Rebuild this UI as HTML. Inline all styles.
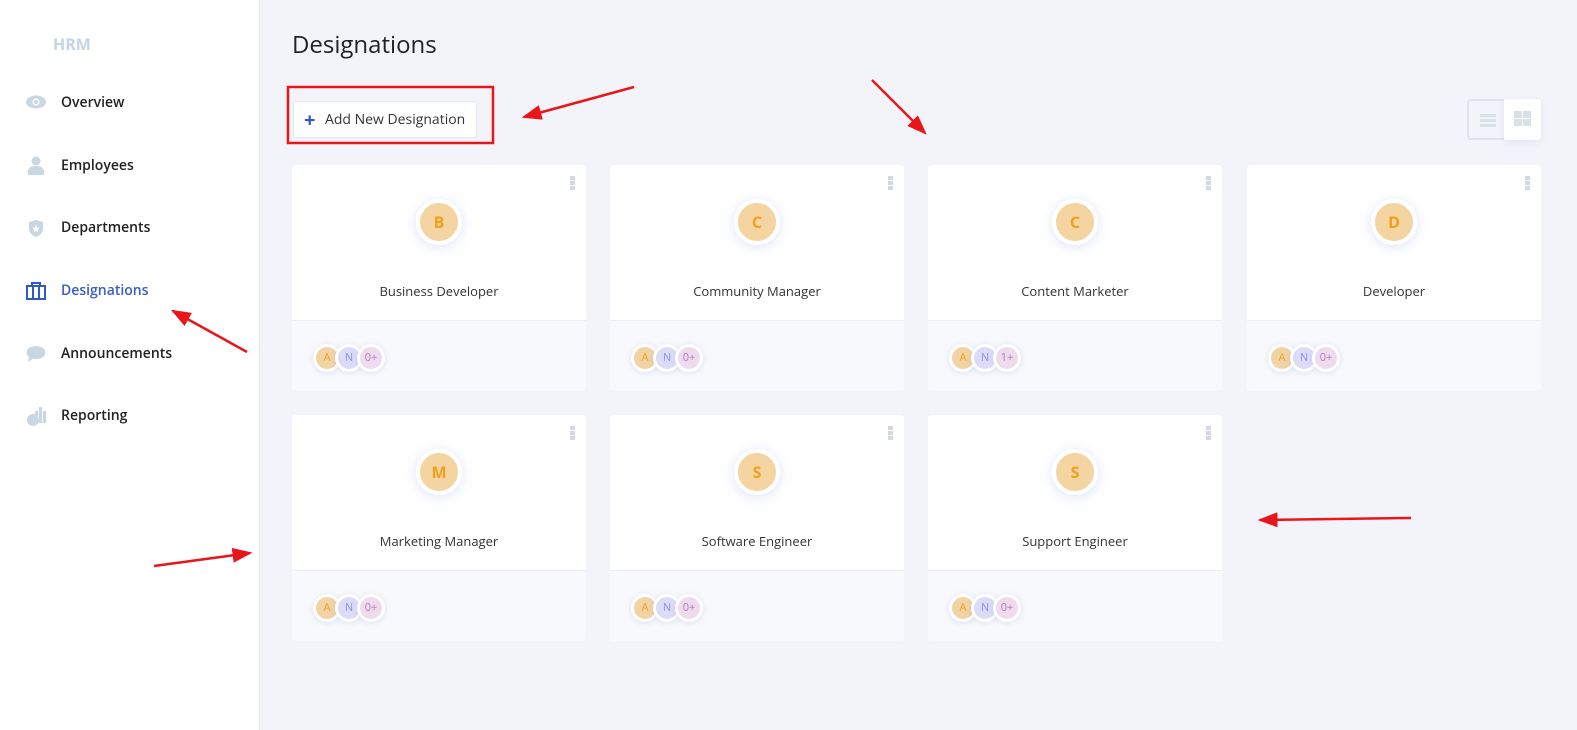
<!DOCTYPE html>
<html><head><meta charset="utf-8"><style>
*{box-sizing:border-box;margin:0;padding:0}
body{width:1577px;height:730px;overflow:hidden;background:#f3f4f9;font-family:"Open Sans","Liberation Sans",sans-serif;position:relative;color:#2a2f3a}
.side{position:absolute;left:0;top:0;width:260px;height:730px;background:#fff;border-right:1px solid #e6e9ef}
.logo{position:absolute;left:53px;top:33px;font-weight:bold;font-size:16px;color:#c3d4e2}
.nav{position:absolute;left:61px;font-size:14px;font-weight:600;color:#222}
.ic{position:absolute;left:26px}
h1{position:absolute;left:292px;top:28px;font-size:24px;font-weight:400;color:#222}
.btn{position:absolute;left:293px;top:101px;width:184px;height:37px;background:#fff;border:1px solid #e6e9ef;border-radius:3px;font-size:14px;color:#333;line-height:36px;padding-left:31px}
.btn b{position:absolute;left:10px;top:0;color:#2f59c5;font-size:20px}
.card{position:absolute;width:294px;height:226px;background:#fff;border-radius:4px;overflow:hidden}
.card .ft{position:absolute;left:0;top:155px;width:100%;height:71px;background:#f8f9fc;border-top:1px solid #eceef3}
.big{position:absolute;left:124px;top:34px;width:46px;height:46px;border-radius:50%;background:#f4d4a0;border:4px solid #fff;box-shadow:0 2px 12px rgba(150,170,220,.3);color:#f0a01c;font-weight:bold;font-size:16px;text-align:center;line-height:38px}
.nm{position:absolute;left:0;width:100%;top:117px;text-align:center;font-size:13px;color:#333}
.dots{position:absolute;left:278px;top:11px;width:5px}
.dots i{display:block;width:5px;height:4px;background:#d4d8e2;margin-bottom:1px}
.s{position:absolute;top:23px;width:28px;height:28px;border-radius:50%;border:3px solid #fff;font-size:11px;text-align:center;line-height:22px;box-shadow:0 1px 6px rgba(150,170,220,.3)}
</style></head><body>
<div class="side">
<div class="logo">HRM</div>
<svg class="ic" style="top:95px" width="20" height="14" viewBox="0 0 20 14"><ellipse cx="10" cy="7" rx="10" ry="6.5" fill="#c9d7e2"/><circle cx="10" cy="7" r="3.5" fill="#fff"/><circle cx="10" cy="7" r="2" fill="#c9d7e2"/></svg>
<div class="nav" style="top:93px">Overview</div>
<svg class="ic" style="top:156px" width="20" height="20" viewBox="0 0 20 20"><circle cx="10" cy="5" r="4.5" fill="#c9d7e2"/><path d="M2 19v-4c0-3 3-5 8-5s8 2 8 5v4z" fill="#c9d7e2"/></svg>
<div class="nav" style="top:156px">Employees</div>
<svg class="ic" style="top:219px" width="20" height="20" viewBox="0 0 20 20"><path d="M3 3l7-2 7 2v7c0 4-4 7-7 8-3-1-7-4-7-8z" fill="#c9d7e2"/><path d="M10 6l1.2 2.5 2.6.3-2 1.8.6 2.6L10 12l-2.4 1.2.6-2.6-2-1.8 2.6-.3z" fill="#fff"/></svg>
<div class="nav" style="top:218px">Departments</div>
<svg class="ic" style="top:281px" width="20" height="19" viewBox="0 0 20 19"><path d="M6 5V2h8v3" fill="none" stroke="#2f59c5" stroke-width="2"/><rect x="1" y="5" width="18" height="13" fill="none" stroke="#2f59c5" stroke-width="2"/><path d="M7 5v13M13 5v13" stroke="#2f59c5" stroke-width="2"/></svg>
<div class="nav" style="top:281px;color:#3a5cc7">Designations</div>
<svg class="ic" style="top:345px" width="20" height="18" viewBox="0 0 20 18"><ellipse cx="10" cy="7.5" rx="9.5" ry="6.5" fill="#c9d7e2"/><path d="M3 11l-1 6 6-4z" fill="#c9d7e2"/></svg>
<div class="nav" style="top:344px">Announcements</div>
<svg class="ic" style="top:405px" width="22" height="22" viewBox="0 0 22 22"><circle cx="7" cy="15" r="6" fill="#c9d7e2"/><rect x="9" y="6" width="3" height="12" fill="#c9d7e2"/><rect x="13" y="2" width="3" height="16" fill="#c9d7e2"/><rect x="17" y="6" width="3" height="12" fill="#c9d7e2"/></svg>
<div class="nav" style="top:406px">Reporting</div>
</div>
<h1>Designations</h1>
<div class="btn"><b>+</b>Add New Designation</div>
<div style="position:absolute;left:1467px;top:99px;width:38px;height:41px;border:2px solid #dfe4ec;border-right:none;border-radius:4px 0 0 4px;background:#f3f4f9"><div style="position:absolute;left:11px;top:13px;width:16px;height:3px;background:#d6e2e8;box-shadow:0 5px 0 #d6e2e8,0 10px 0 #d6e2e8"></div></div>
<div style="position:absolute;left:1504px;top:99px;width:37px;height:41px;background:#fff;border-radius:0 4px 4px 0;box-shadow:0 2px 8px rgba(150,170,220,.2)"><div style="position:absolute;left:10px;top:12px;width:8px;height:7px;background:#d6e2e8;box-shadow:9px 0 0 #d6e2e8,0 8px 0 #d6e2e8,9px 8px 0 #d6e2e8"></div></div>

<div class="card" style="left:292px;top:165px"><div class="dots"><i></i><i></i><i></i></div><div class="big">B</div><div class="nm">Business Developer</div><div class="ft"><div class="s" style="left:21px;background:#f2d3a3;color:#f0a01c">A</div><div class="s" style="left:43px;background:#dcdcf9;color:#8b8ff0">N</div><div class="s" style="left:65px;background:#eedcee;color:#b07ac0">0+</div></div></div>
<div class="card" style="left:610px;top:165px"><div class="dots"><i></i><i></i><i></i></div><div class="big">C</div><div class="nm">Community Manager</div><div class="ft"><div class="s" style="left:21px;background:#f2d3a3;color:#f0a01c">A</div><div class="s" style="left:43px;background:#dcdcf9;color:#8b8ff0">N</div><div class="s" style="left:65px;background:#eedcee;color:#b07ac0">0+</div></div></div>
<div class="card" style="left:928px;top:165px"><div class="dots"><i></i><i></i><i></i></div><div class="big">C</div><div class="nm">Content Marketer</div><div class="ft"><div class="s" style="left:21px;background:#f2d3a3;color:#f0a01c">A</div><div class="s" style="left:43px;background:#dcdcf9;color:#8b8ff0">N</div><div class="s" style="left:65px;background:#eedcee;color:#b07ac0">1+</div></div></div>
<div class="card" style="left:1247px;top:165px"><div class="dots"><i></i><i></i><i></i></div><div class="big">D</div><div class="nm">Developer</div><div class="ft"><div class="s" style="left:21px;background:#f2d3a3;color:#f0a01c">A</div><div class="s" style="left:43px;background:#dcdcf9;color:#8b8ff0">N</div><div class="s" style="left:65px;background:#eedcee;color:#b07ac0">0+</div></div></div>
<div class="card" style="left:292px;top:415px"><div class="dots"><i></i><i></i><i></i></div><div class="big">M</div><div class="nm">Marketing Manager</div><div class="ft"><div class="s" style="left:21px;background:#f2d3a3;color:#f0a01c">A</div><div class="s" style="left:43px;background:#dcdcf9;color:#8b8ff0">N</div><div class="s" style="left:65px;background:#eedcee;color:#b07ac0">0+</div></div></div>
<div class="card" style="left:610px;top:415px"><div class="dots"><i></i><i></i><i></i></div><div class="big">S</div><div class="nm">Software Engineer</div><div class="ft"><div class="s" style="left:21px;background:#f2d3a3;color:#f0a01c">A</div><div class="s" style="left:43px;background:#dcdcf9;color:#8b8ff0">N</div><div class="s" style="left:65px;background:#eedcee;color:#b07ac0">0+</div></div></div>
<div class="card" style="left:928px;top:415px"><div class="dots"><i></i><i></i><i></i></div><div class="big">S</div><div class="nm">Support Engineer</div><div class="ft"><div class="s" style="left:21px;background:#f2d3a3;color:#f0a01c">A</div><div class="s" style="left:43px;background:#dcdcf9;color:#8b8ff0">N</div><div class="s" style="left:65px;background:#eedcee;color:#b07ac0">0+</div></div></div>

<svg style="position:absolute;left:0;top:0" width="1577" height="730">
<defs><marker id="a" markerWidth="8" markerHeight="6" refX="7" refY="3" orient="auto"><path d="M0 0L8 3L0 6z" fill="#e8161a"/></marker></defs>
<rect x="288" y="87" width="205" height="56" fill="none" stroke="#e8161a" stroke-width="2.5"/>
<g stroke="#e8161a" stroke-width="2.5" marker-end="url(#a)">
<line x1="634" y1="87" x2="524" y2="117"/>
<line x1="872" y1="80" x2="925" y2="133"/>
<line x1="247" y1="352" x2="173" y2="311"/>
<line x1="154" y1="566" x2="250" y2="553"/>
<line x1="1411" y1="518" x2="1260" y2="520"/>
</g></svg>
</body></html>
